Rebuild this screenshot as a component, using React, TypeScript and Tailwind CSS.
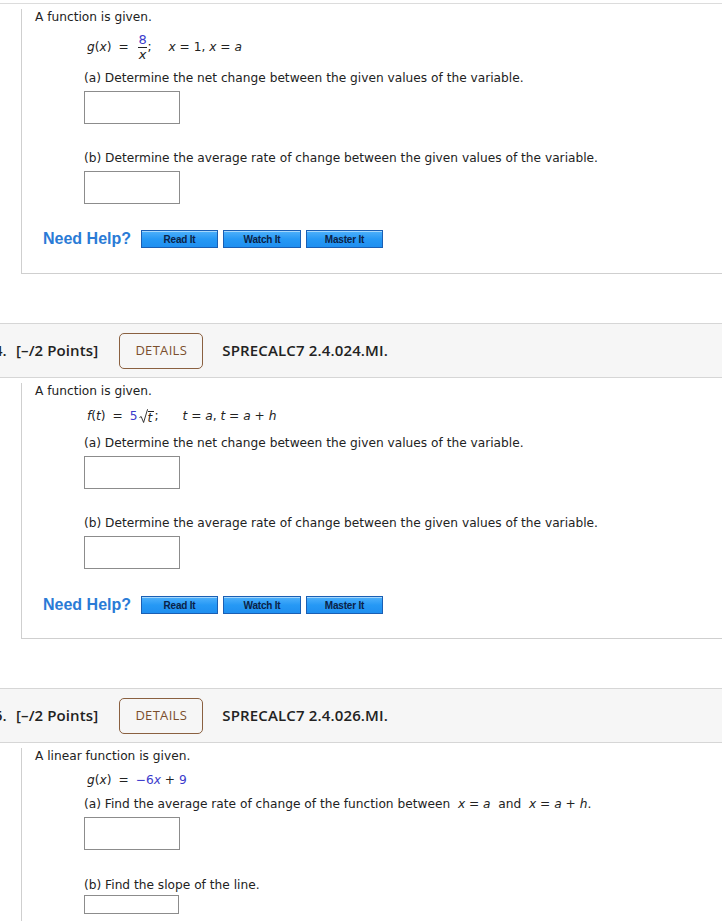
import React from "react";

const body = "font-['DejaVu_Sans',Verdana,sans-serif] text-[12.2px] text-[#222]";

function Box({ h = "h-[33px]", w = "w-[96px]" }: { h?: string; w?: string }) {
  return <div className={`${h} ${w} border border-[#8c8c8c] bg-white ml-[49px]`} />;
}

function Line({ children, mt, indent = false }: { children: React.ReactNode; mt: string; indent?: boolean }) {
  return (
    <div className={`h-[16px] leading-[16px] ${mt} whitespace-nowrap ${indent ? "ml-[49px]" : ""}`}>{children}</div>
  );
}

function HelpRow({ mt }: { mt: string }) {
  const btn =
    "w-[77px] h-[18px] flex items-center justify-center border border-[#1a5fb4] bg-gradient-to-b from-[#4db1fb] via-[#2699f5] to-[#1f8ff0] text-[10px] font-bold text-[#0b2246] font-['Liberation_Sans',Arial,sans-serif] tracking-[-0.2px] shadow-[inset_0_1px_0_rgba(255,255,255,0.5)]";
  return (
    <div className={`flex items-center h-[18px] ${mt} ml-[8px]`}>
      <span className="font-['Liberation_Sans',Arial,sans-serif] font-bold text-[16px] text-[#2a7bd6] w-[98px]">Need Help?</span>
      <div className="flex gap-[5px]">
        <div className={btn}>Read It</div>
        <div className={`${btn} w-[78px]`}>Watch It</div>
        <div className={btn}>Master It</div>
      </div>
    </div>
  );
}

function Header({ num, code }: { num: string; code: string }) {
  return (
    <div className="h-[55px] border-y border-[#d6d6d6] bg-[#f6f6f6] flex items-center font-['Open_Sans',sans-serif] text-[#222]">
      <span className="-ml-[6px] text-[15px] font-semibold w-[22px]">{num}.</span>
      <span className="text-[15px] font-semibold tracking-[0.1px]">[–/2 Points]</span>
      <div className="ml-[21px] w-[84px] h-[36px] border border-[#8a6040] rounded-[5px] flex items-center justify-center text-[13px] font-medium text-[#7a4e2d] tracking-[0.3px]">
        DETAILS
      </div>
      <span className="ml-[19px] text-[15px] font-semibold tracking-[0.15px]">{code}</span>
    </div>
  );
}

function Card({ children, pb }: { children: React.ReactNode; pb: string }) {
  return (
    <div className={`ml-[21px] border-l border-b border-[#cfcfcf] pl-[13px] ${pb} ${body}`}>{children}</div>
  );
}

const blue = "text-[#3b3bcc]";

export default function App() {
  return (
    <div className="w-[722px] min-h-[921px] bg-white overflow-hidden">
      <div className="h-[3px] bg-white" />
      <div className="border-t border-[#dcdcdc]" />
      <Card pb="pb-[25px]">
        <Line mt="mt-[5px]">A function is given.</Line>
        <div className="mt-[9px] h-[26px] ml-[52px] flex items-center whitespace-nowrap">
          <span className="italic">g</span>
          <span>(</span>
          <span className="italic">x</span>
          <span>)</span>
          <span className="mx-[7px]">=</span>
          <span className="inline-flex flex-col items-center text-[13px] ml-[2px]">
            <span className={`${blue} leading-[13px] pb-[1px]`}>8</span>
            <span className="border-t border-[#222] px-[1px] italic leading-[13px]">x</span>
          </span>
          <span>;</span>
          <span className="ml-[17px] italic">x</span>
          <span>&nbsp;=&nbsp;1,&nbsp;</span>
          <span className="italic">x</span>
          <span>&nbsp;=&nbsp;</span>
          <span className="italic">a</span>
        </div>
        <Line mt="mt-[10px]" indent>(a) Determine the net change between the given values of the variable.</Line>
        <div className="mt-[5px]"><Box /></div>
        <Line mt="mt-[26px]" indent>(b) Determine the average rate of change between the given values of the variable.</Line>
        <div className="mt-[5px]"><Box /></div>
        <HelpRow mt="mt-[26px]" />
      </Card>
      <div className="h-[49px]" />
      <Header num="4" code="SPRECALC7 2.4.024.MI." />
      <Card pb="pb-[24px]">
        <Line mt="mt-[5px]">A function is given.</Line>
        <div className="mt-[9px] h-[16px] leading-[16px] ml-[52px] flex items-center whitespace-nowrap">
          <span className="italic">f</span>
          <span>(</span>
          <span className="italic">t</span>
          <span>)</span>
          <span className="mx-[7px]">=</span>
          <span className={blue}>5</span>
          <svg width="9" height="16" viewBox="0 0 9 16" className="ml-[1px]">
            <path d="M0.5 9.5 L2.2 8.6 L4.6 14.5 L8.5 1.5 L9 1.5" fill="none" stroke="#222" strokeWidth="0.9" />
          </svg>
          <span className="border-t border-[#222] italic leading-[13px] mt-[3px] pr-[2px]">t</span>
          <span>;</span>
          <span className="ml-[24px] italic">t</span>
          <span>&nbsp;=&nbsp;</span>
          <span className="italic">a</span>
          <span>,&nbsp;</span>
          <span className="italic">t</span>
          <span>&nbsp;=&nbsp;</span>
          <span className="italic">a</span>
          <span>&nbsp;+&nbsp;</span>
          <span className="italic">h</span>
        </div>
        <Line mt="mt-[11px]" indent>(a) Determine the net change between the given values of the variable.</Line>
        <div className="mt-[5px]"><Box /></div>
        <Line mt="mt-[26px]" indent>(b) Determine the average rate of change between the given values of the variable.</Line>
        <div className="mt-[5px]"><Box /></div>
        <HelpRow mt="mt-[27px]" />
      </Card>
      <div className="h-[49px]" />
      <Header num="5" code="SPRECALC7 2.4.026.MI." />
      <Card pb="pb-[10px]">
        <Line mt="mt-[5px]">A linear function is given.</Line>
        <div className="mt-[8px] h-[16px] leading-[16px] ml-[52px] flex items-center whitespace-nowrap">
          <span className="italic">g</span>
          <span>(</span>
          <span className="italic">x</span>
          <span>)</span>
          <span className="mx-[7px]">=</span>
          <span className={blue}>−6</span>
          <span className={`italic ${blue}`}>x</span>
          <span>&nbsp;+&nbsp;</span>
          <span className={blue}>9</span>
        </div>
        <Line mt="mt-[8px]" indent>
          <span>(a) Find the average rate of change of the function between </span>
          <span className="italic">&nbsp;x</span> = <span className="italic">a</span>&nbsp; and&nbsp; <span className="italic">x</span> = <span className="italic">a</span> + <span className="italic">h</span>.
        </Line>
        <div className="mt-[5px]"><Box /></div>
        <Line mt="mt-[27px]" indent>(b) Find the slope of the line.</Line>
        <div className="mt-[2px]"><Box h="h-[19px]" w="w-[95px]" /></div>
      </Card>
    </div>
  );
}
